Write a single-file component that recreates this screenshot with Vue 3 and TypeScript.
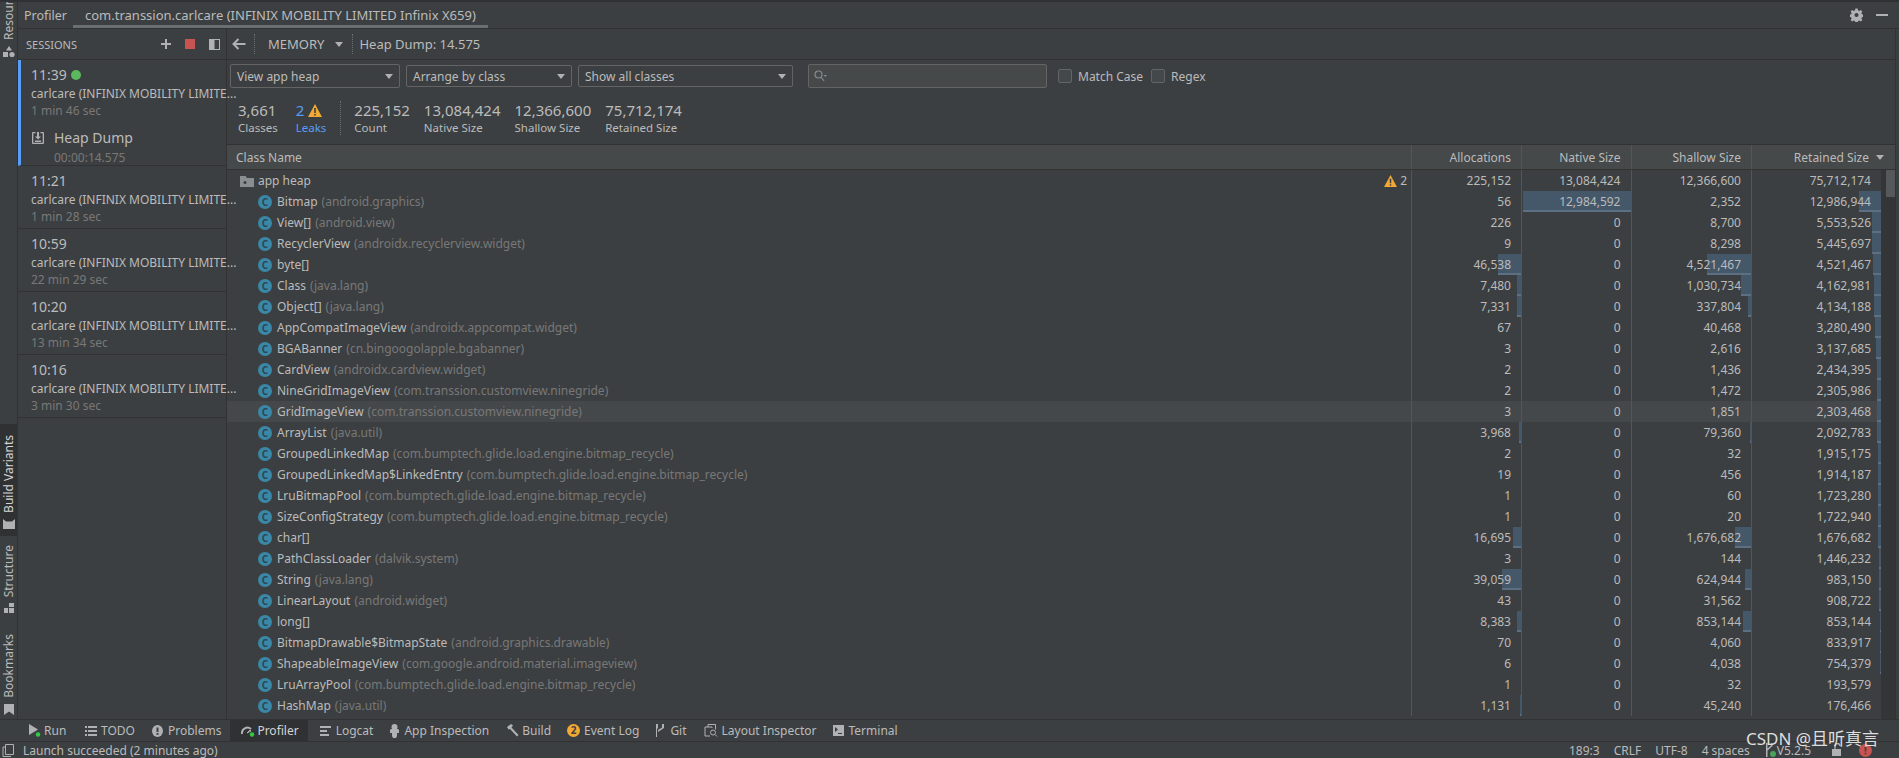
<script setup lang="ts">
interface HeapRow {
  name: string
  pkg: string
  alloc: number
  native: number
  shallow: number
  retained: number
}

interface Session {
  time: string
  duration: string
}

interface ToolTab {
  id: string
  label: string
}

const totals = { alloc: 225152, native: 13084424, shallow: 12366600, retained: 75712174 }

const rows: HeapRow[] = [
  { name: 'Bitmap', pkg: 'android.graphics', alloc: 56, native: 12984592, shallow: 2352, retained: 12986944 },
  { name: 'View[]', pkg: 'android.view', alloc: 226, native: 0, shallow: 8700, retained: 5553526 },
  { name: 'RecyclerView', pkg: 'androidx.recyclerview.widget', alloc: 9, native: 0, shallow: 8298, retained: 5445697 },
  { name: 'byte[]', pkg: '', alloc: 46538, native: 0, shallow: 4521467, retained: 4521467 },
  { name: 'Class', pkg: 'java.lang', alloc: 7480, native: 0, shallow: 1030734, retained: 4162981 },
  { name: 'Object[]', pkg: 'java.lang', alloc: 7331, native: 0, shallow: 337804, retained: 4134188 },
  { name: 'AppCompatImageView', pkg: 'androidx.appcompat.widget', alloc: 67, native: 0, shallow: 40468, retained: 3280490 },
  { name: 'BGABanner', pkg: 'cn.bingoogolapple.bgabanner', alloc: 3, native: 0, shallow: 2616, retained: 3137685 },
  { name: 'CardView', pkg: 'androidx.cardview.widget', alloc: 2, native: 0, shallow: 1436, retained: 2434395 },
  { name: 'NineGridImageView', pkg: 'com.transsion.customview.ninegride', alloc: 2, native: 0, shallow: 1472, retained: 2305986 },
  { name: 'GridImageView', pkg: 'com.transsion.customview.ninegride', alloc: 3, native: 0, shallow: 1851, retained: 2303468 },
  { name: 'ArrayList', pkg: 'java.util', alloc: 3968, native: 0, shallow: 79360, retained: 2092783 },
  { name: 'GroupedLinkedMap', pkg: 'com.bumptech.glide.load.engine.bitmap_recycle', alloc: 2, native: 0, shallow: 32, retained: 1915175 },
  { name: 'GroupedLinkedMap$LinkedEntry', pkg: 'com.bumptech.glide.load.engine.bitmap_recycle', alloc: 19, native: 0, shallow: 456, retained: 1914187 },
  { name: 'LruBitmapPool', pkg: 'com.bumptech.glide.load.engine.bitmap_recycle', alloc: 1, native: 0, shallow: 60, retained: 1723280 },
  { name: 'SizeConfigStrategy', pkg: 'com.bumptech.glide.load.engine.bitmap_recycle', alloc: 1, native: 0, shallow: 20, retained: 1722940 },
  { name: 'char[]', pkg: '', alloc: 16695, native: 0, shallow: 1676682, retained: 1676682 },
  { name: 'PathClassLoader', pkg: 'dalvik.system', alloc: 3, native: 0, shallow: 144, retained: 1446232 },
  { name: 'String', pkg: 'java.lang', alloc: 39059, native: 0, shallow: 624944, retained: 983150 },
  { name: 'LinearLayout', pkg: 'android.widget', alloc: 43, native: 0, shallow: 31562, retained: 908722 },
  { name: 'long[]', pkg: '', alloc: 8383, native: 0, shallow: 853144, retained: 853144 },
  { name: 'BitmapDrawable$BitmapState', pkg: 'android.graphics.drawable', alloc: 70, native: 0, shallow: 4060, retained: 833917 },
  { name: 'ShapeableImageView', pkg: 'com.google.android.material.imageview', alloc: 6, native: 0, shallow: 4038, retained: 754379 },
  { name: 'LruArrayPool', pkg: 'com.bumptech.glide.load.engine.bitmap_recycle', alloc: 1, native: 0, shallow: 32, retained: 193579 },
  { name: 'HashMap', pkg: 'java.util', alloc: 1131, native: 0, shallow: 45240, retained: 176466 },
]

const pastSessions: Session[] = [
  { time: '11:21', duration: '1 min 28 sec' },
  { time: '10:59', duration: '22 min 29 sec' },
  { time: '10:20', duration: '13 min 34 sec' },
  { time: '10:16', duration: '3 min 30 sec' },
]

const stats = [
  { value: '225,152', label: 'Count' },
  { value: '13,084,424', label: 'Native Size' },
  { value: '12,366,600', label: 'Shallow Size' },
  { value: '75,712,174', label: 'Retained Size' },
]

const tools: ToolTab[] = [
  { id: 'run', label: 'Run' },
  { id: 'todo', label: 'TODO' },
  { id: 'problems', label: 'Problems' },
  { id: 'profiler', label: 'Profiler' },
  { id: 'logcat', label: 'Logcat' },
  { id: 'inspection', label: 'App Inspection' },
  { id: 'build', label: 'Build' },
  { id: 'event', label: 'Event Log' },
  { id: 'git', label: 'Git' },
  { id: 'layout', label: 'Layout Inspector' },
  { id: 'terminal', label: 'Terminal' },
]

const fmt = (n: number) => n.toLocaleString('en-US')
const pct = (v: number, total: number) => `${(v / total) * 100}%`
</script>

<template>
  <div class="ide">
    <div class="top-band"></div>
    <div class="main">
      <aside class="strip">
        <div class="strip-clip"><span>Resource Manager</span></div>
        <svg class="strip-icon first" width="12" height="12" viewBox="0 0 12 12"><path d="M6 0l3 4.500H3z" fill="#afb1b3"/><rect x="0" y="6" width="5" height="5" fill="#afb1b3"/><circle cx="9" cy="8.500" r="2.600" fill="#afb1b3"/></svg>
        <div class="strip-tab active">
          <span class="vtext">Build Variants</span>
          <svg width="12" height="10" viewBox="0 0 12 10"><path d="M0 0l3 2.500h6L12 0v10H0z" fill="#afb1b3"/></svg>
        </div>
        <div class="strip-tab structure">
          <span class="vtext">Structure</span>
          <svg width="10" height="10" viewBox="0 0 10 10"><rect x="5" y="0" width="5" height="4" fill="#afb1b3"/><rect x="0" y="5" width="4" height="5" fill="#afb1b3"/><rect x="5" y="5" width="5" height="5" fill="#afb1b3"/></svg>
        </div>
        <div class="strip-tab bookmarks">
          <span class="vtext">Bookmarks</span>
          <svg width="10" height="11" viewBox="0 0 10 11"><path d="M0 0h10v11L5 7.500 0 11z" fill="#afb1b3"/></svg>
        </div>
      </aside>

      <div class="workspace">
        <header class="tabs">
          <span class="tab-title">Profiler</span>
          <span class="tab-active">com.transsion.carlcare (INFINIX MOBILITY LIMITED Infinix X659)</span>
          <span class="spacer"></span>
          <svg class="gear" width="13" height="14" viewBox="0 0 14 14"><path fill="#afb1b3" fill-rule="evenodd" d="M5.800 0h2.400l.4 2 1.300.6 1.800-1.100 1.600 1.700-1.100 1.700.6 1.300 2 .4v2.400l-2 .4-.6 1.300 1.100 1.800-1.600 1.600-1.800-1.100-1.300.6-.4 2H5.800l-.4-2-1.300-.6-1.800 1.100L.700 12.500l1.100-1.800-.6-1.300-2-.4V6.600l2-.4.6-1.300-1.100-1.700 1.600-1.700 1.800 1.100 1.300-.6zM7 4.800a2.200 2.200 0 1 0 0 4.400 2.200 2.200 0 0 0 0-4.400z"/></svg>
          <span class="minimize"></span>
        </header>

        <div class="panels">
          <section class="sessions">
            <div class="sessions-head">
              <span class="sessions-title">SESSIONS</span>
              <svg width="12" height="12" viewBox="0 0 12 12" class="plus"><path d="M6 1v10M1 6h10" stroke="#afb1b3" stroke-width="2"/></svg>
              <span class="stop"></span>
              <svg width="11" height="11" viewBox="0 0 11 11" class="split"><rect x=".5" y=".5" width="10" height="10" fill="none" stroke="#afb1b3"/><rect x="1" y="1" width="4.500" height="9" fill="#afb1b3"/></svg>
            </div>
            <div class="session current">
              <div class="s-time">11:39 <i class="live"></i></div>
              <div class="s-name">carlcare (INFINIX MOBILITY LIMITE...</div>
              <div class="s-dur">1 min 46 sec</div>
              <div class="dump">
                <svg width="12" height="12" viewBox="0 0 12 12"><path fill="#afb1b3" fill-rule="evenodd" d="M1 0h2.500v1.200H1.300v9.500h9.400V1.200H8.500V0H11a1 1 0 0 1 1 1v10a1 1 0 0 1-1 1H1a1 1 0 0 1-1-1V1a1 1 0 0 1 1-1z"/><path fill="#afb1b3" d="M5 0h2v4.500h2L6 7.500 3 4.500h2zM3 8.500h6V10H3z"/></svg>
                <span>Heap Dump</span>
              </div>
              <div class="dump-time">00:00:14.575</div>
            </div>
            <div v-for="s in pastSessions" :key="s.time" class="session">
              <div class="s-time">{{ s.time }}</div>
              <div class="s-name">carlcare (INFINIX MOBILITY LIMITE...</div>
              <div class="s-dur">{{ s.duration }}</div>
            </div>
          </section>

          <section class="memory">
            <div class="toolbar">
              <svg width="14" height="12" viewBox="0 0 14 12"><path d="M13.500 6H2M6.500 1L1.500 6l5 5" fill="none" stroke="#afb1b3" stroke-width="2"/></svg>
              <i class="dots first-dots"></i>
              <span class="mem-label">MEMORY</span>
              <i class="caret big"></i>
              <i class="dots"></i>
              <span class="dump-label">Heap Dump: 14.575</span>
            </div>

            <div class="filters">
              <div class="combo c1"><span>View app heap</span><i class="caret"></i></div>
              <div class="combo c2"><span>Arrange by class</span><i class="caret"></i></div>
              <div class="combo c3"><span>Show all classes</span><i class="caret"></i></div>
              <div class="search">
                <svg width="13" height="12" viewBox="0 0 13 12"><circle cx="4.500" cy="4.500" r="3.500" fill="none" stroke="#868a8c" stroke-width="1.200"/><path d="M7 7l3 4" stroke="#868a8c" stroke-width="1.200"/><path d="M9.500 5h3.500l-1.750 2z" fill="#868a8c"/></svg>
              </div>
              <label class="check c-match"><i></i>Match Case</label>
              <label class="check"><i></i>Regex</label>
            </div>

            <div class="stats">
              <div class="stat s-classes"><b>3,661</b><span>Classes</span></div>
              <div class="stat s-leaks">
                <b class="blue">2 <svg width="14" height="13" viewBox="0 0 14 13"><path d="M7 0l7 13H0z" fill="#f2a933"/><path d="M6.200 4h1.600v5H6.200zM6.200 10h1.600v1.600H6.200z" fill="#3c3f41"/></svg></b>
                <span class="blue">Leaks</span>
              </div>
              <i class="dots tall"></i>
              <div v-for="st in stats" :key="st.label" class="stat"><b>{{ st.value }}</b><span>{{ st.label }}</span></div>
            </div>

            <div class="thead">
              <div class="th name">Class Name</div>
              <div class="th">Allocations</div>
              <div class="th">Native Size</div>
              <div class="th">Shallow Size</div>
              <div class="th sorted">Retained Size <i class="caret"></i></div>
            </div>

            <div class="tbody">
              <div class="rows">
                <div class="row">
                  <div class="cell name root">
                    <svg width="14" height="12" viewBox="0 0 14 12"><path d="M0 1h5.500l1.500 2h7v9H0z" fill="#8a8e91"/><circle cx="5" cy="7.500" r="1.500" fill="#3c3f41"/></svg>
                    <span class="cn">app heap</span>
                    <span class="leak">
                      <svg width="13" height="12" viewBox="0 0 14 13"><path d="M7 0l7 13H0z" fill="#f2a933"/><path d="M6.200 4h1.600v5H6.200zM6.200 10h1.600v1.600H6.200z" fill="#3c3f41"/></svg>
                      2
                    </span>
                  </div>
                  <div class="cell num">{{ fmt(totals.alloc) }}</div>
                  <div class="cell num">{{ fmt(totals.native) }}</div>
                  <div class="cell num">{{ fmt(totals.shallow) }}</div>
                  <div class="cell num">{{ fmt(totals.retained) }}</div>
                </div>
                <div v-for="r in rows" :key="r.name" class="row" :class="{ hover: r.name === 'GridImageView' }">
                  <div class="cell name">
                    <span class="cls">C</span>
                    <span class="cn">{{ r.name }}</span>
                    <span v-if="r.pkg" class="pkg">({{ r.pkg }})</span>
                  </div>
                  <div class="cell num"><i class="bar" :style="{ width: pct(r.alloc, totals.alloc) }"></i><span>{{ fmt(r.alloc) }}</span></div>
                  <div class="cell num"><i class="bar" :style="{ width: pct(r.native, totals.native) }"></i><span>{{ fmt(r.native) }}</span></div>
                  <div class="cell num"><i class="bar" :style="{ width: pct(r.shallow, totals.shallow) }"></i><span>{{ fmt(r.shallow) }}</span></div>
                  <div class="cell num"><i class="bar" :style="{ width: pct(r.retained, totals.retained) }"></i><span>{{ fmt(r.retained) }}</span></div>
                </div>
              </div>
              <div class="scroll"><i></i></div>
            </div>
          </section>
          <div class="edge"></div>
        </div>
      </div>
    </div>

    <nav class="toolbar-bottom">
      <div v-for="t in tools" :key="t.id" class="tool" :class="['t-' + t.id, { on: t.id === 'profiler' }]">
        <svg v-if="t.id === 'run'" width="13" height="13" viewBox="0 0 13 13"><path d="M1 0l9 5.500L1 11z" fill="#afb1b3"/><circle cx="10" cy="10.500" r="2.200" fill="#2ecc40"/></svg>
        <svg v-else-if="t.id === 'todo'" width="12" height="10" viewBox="0 0 12 10"><path d="M0 0h2v2H0zM3 0h9v2H3zM0 4h2v2H0zM3 4h9v2H3zM0 8h2v2H0zM3 8h9v2H3z" fill="#afb1b3"/></svg>
        <svg v-else-if="t.id === 'problems'" width="11" height="12" viewBox="0 0 11 12"><ellipse cx="5.500" cy="6" rx="5.500" ry="6" fill="#afb1b3"/><rect x="4.500" y="2.500" width="2" height="4.500" fill="#3c3f41"/><rect x="4.500" y="8" width="2" height="1.800" fill="#3c3f41"/></svg>
        <svg v-else-if="t.id === 'profiler'" width="14" height="13" viewBox="0 0 14 13"><path d="M1 10a5.500 5.500 0 0 1 9-5" fill="none" stroke="#afb1b3" stroke-width="2"/><path d="M6 9l3-3 1 1z" stroke="#afb1b3"/><circle cx="11" cy="10.500" r="2.200" fill="#2ecc40"/></svg>
        <svg v-else-if="t.id === 'logcat'" width="11" height="10" viewBox="0 0 11 10"><path d="M0 0h11v2H0zM0 4h7v2H0zM0 8h9v2H0z" fill="#afb1b3"/></svg>
        <svg v-else-if="t.id === 'inspection'" width="11" height="14" viewBox="0 0 11 14"><circle cx="5.500" cy="3" r="3" fill="#afb1b3"/><path d="M2 5h7l1 1v3H8v3l-1 2H4l-1-2V9H1V6z" fill="#afb1b3"/></svg>
        <svg v-else-if="t.id === 'build'" width="13" height="13" viewBox="0 0 13 13"><path d="M1 3l4-3 2 1.500L5.500 3.500 12.500 11 11 12.500 4 5 2.500 5.500z" fill="#afb1b3"/></svg>
        <span v-else-if="t.id === 'event'" class="badge">2</span>
        <svg v-else-if="t.id === 'git'" width="10" height="13" viewBox="0 0 10 13"><path d="M2 0h2v4l-1 1v8H2z M8 0h2v4L4 8V6l4-2.500z" fill="#afb1b3"/></svg>
        <svg v-else-if="t.id === 'layout'" width="14" height="13" viewBox="0 0 14 13"><path d="M4 .5h7.500v5M4 .5V3M1 3h7v1M1 3v9h5" fill="none" stroke="#afb1b3"/><circle cx="9" cy="8.500" r="2.500" fill="none" stroke="#afb1b3"/><path d="M11 10.500l2 2" stroke="#afb1b3"/></svg>
        <svg v-else width="11" height="11" viewBox="0 0 11 11"><rect width="11" height="11" fill="#afb1b3"/><path d="M2 2l3 2.500L2 7zM5 8h4v1H5z" fill="#3c3f41"/></svg>
        <span>{{ t.label }}</span>
      </div>
    </nav>

    <footer class="status">
      <svg class="st-box" width="12" height="13" viewBox="0 0 12 13"><path d="M3.500.5h8v10h-8zM3.500 3H1v9.500h8" fill="none" stroke="#afb1b3"/></svg>
      <span>Launch succeeded (2 minutes ago)</span>
      <span class="spacer"></span>
      <span class="st st-pos">189:3</span>
      <span class="st">CRLF</span>
      <span class="st">UTF-8</span>
      <span class="st">4 spaces</span>
      <svg class="st-git" width="12" height="14" viewBox="0 0 12 14"><path d="M2 0h1.500v14H2zM7 0h1.500v3L3 8V6l4-3.500z" fill="#afb1b3"/><circle cx="9" cy="11" r="3" fill="#4aa35a"/></svg>
      <span class="st">V5.2.5</span>
      <svg class="st-lock" width="12" height="14" viewBox="0 0 12 14"><path d="M4 6V3a2.500 2.500 0 0 1 5 0" fill="none" stroke="#afb1b3" stroke-width="1.300"/><rect x="1" y="6" width="9" height="7" fill="#afb1b3"/></svg>
      <svg class="st-err" width="13" height="13" viewBox="0 0 13 13"><circle cx="6.500" cy="6.500" r="6.500" fill="#c75450"/><path d="M5.700 2.500h1.600v5H5.700zM5.700 8.700h1.600v1.600H5.700z" fill="#3c3f41"/></svg>
      <span class="st-end"></span>
    </footer>

    <div class="watermark">CSDN @且听真言</div>
  </div>
</template>

<style>
html, body {
  background: #3c3f41;
  overflow: hidden;
}
</style>

<style scoped>
.ide {
  position: relative;
  width: 1899px;
  height: 758px;
  display: flex;
  flex-direction: column;
  overflow: hidden;
  background: #3c3f41;
  color: #bbbbbb;
  font-family: "Noto Sans", "Liberation Sans", sans-serif;
  font-size: 12px;
}

.top-band { height: 2px; flex: none; background: #2f3133; }
.main { flex: none; height: 717px; display: flex; border-bottom: 1px solid #323232; }
.spacer { flex: 1; }

/* left tool strip */
.strip {
  width: 17px;
  flex: none;
  border-right: 1px solid #323232;
  display: flex;
  flex-direction: column;
  align-items: center;
}
.strip-clip {
  height: 38px;
  width: 17px;
  overflow: hidden;
  writing-mode: vertical-rl;
  transform: rotate(180deg);
  white-space: nowrap;
  line-height: 17px;
}
.strip-icon.first { margin-top: 6px; }
.strip-tab {
  width: 17px;
  display: flex;
  flex-direction: column;
  align-items: center;
  gap: 6px;
}
.strip-tab.active {
  margin-top: 366px;
  height: 112px;
  padding-top: 11px;
  box-sizing: border-box;
  background: #2f3133;
  color: #d4d4d4;
}
.strip-tab.structure { margin-top: 9px; }
.strip-tab.bookmarks { margin-top: 21px; }
.vtext {
  writing-mode: vertical-rl;
  transform: rotate(180deg);
  line-height: 17px;
  white-space: nowrap;
}

.workspace { flex: 1; min-width: 0; display: flex; flex-direction: column; }

.tabs {
  height: 26px;
  flex: none;
  display: flex;
  align-items: center;
  border-bottom: 1px solid #323232;
  position: relative;
}
.tab-title { margin-left: 6px; font-size: 12.500px; }
.tab-active {
  margin-left: 6px;
  padding: 0 12px;
  align-self: stretch;
  display: flex;
  align-items: center;
  font-size: 13px;
  box-shadow: inset 0 -3px 0 #6a7072;
}
.gear { margin-right: 13px; }
.minimize { width: 12px; height: 2px; background: #afb1b3; margin-right: 11px; }

.panels { flex: 1; min-height: 0; display: flex; }

/* sessions */
.sessions { width: 208px; flex: none; border-right: 1px solid #323232; }
.sessions-head {
  height: 30px;
  display: flex;
  align-items: center;
  border-bottom: 1px solid #323232;
  padding-left: 8px;
}
.sessions-title { font-size: 11px; width: 134px; }
.plus { margin-right: 13px; }
.stop { width: 10px; height: 10px; background: #c75450; margin-right: 14px; }
.session {
  height: 62px;
  border-bottom: 1px solid #323232;
  padding-left: 13px;
  box-sizing: content-box;
  white-space: nowrap;
}
.session.current { height: 105px; border-left: 3px solid #589df6; padding-left: 10px; }
.s-time { font-size: 14px; line-height: 19px; padding-top: 5px; display: flex; align-items: center; gap: 4px; }
.live { width: 10px; height: 10px; border-radius: 50%; background: #5cb85c; }
.s-name { line-height: 18px; margin-top: 1px; }
.s-dur { color: #787878; line-height: 16px; }
.dump { display: flex; align-items: center; gap: 10px; margin-top: 9px; font-size: 14px; line-height: 20px; padding-left: 1px; }
.dump-time { color: #787878; padding-left: 23px; line-height: 18px; margin-top: 1px; }

/* memory panel */
.memory { flex: 1; min-width: 0; display: flex; flex-direction: column; }
.edge { width: 3px; flex: none; border-left: 1px solid #323232; }

.toolbar {
  height: 30px;
  flex: none;
  display: flex;
  align-items: center;
  padding-left: 5px;
  border-bottom: 1px solid #323232;
}
.dots { width: 0; height: 20px; border-left: 1px dotted #6a6e70; }
.first-dots { margin-left: 8px; }
.mem-label { font-size: 13px; margin-left: 13px; }
.caret {
  width: 0;
  height: 0;
  border-left: 4px solid transparent;
  border-right: 4px solid transparent;
  border-top: 5px solid #afb1b3;
}
.caret.big { margin: 0 9px 0 11px; }
.dump-label { font-size: 13px; margin-left: 6px; }

.filters {
  height: 32px;
  flex: none;
  display: flex;
  align-items: center;
  padding-left: 3px;
}
.combo {
  height: 22px;
  display: flex;
  align-items: center;
  justify-content: space-between;
  border: 1px solid #646464;
  border-radius: 2px;
  padding: 0 6px;
  box-sizing: border-box;
  margin-right: 6px;
}
.c1 { width: 170px; height: 24px; }
.c2 { width: 166px; }
.c3 { width: 215px; margin-right: 15px; }
.search {
  width: 239px;
  height: 24px;
  box-sizing: border-box;
  background: #45494a;
  border: 1px solid #646464;
  border-radius: 2px;
  display: flex;
  align-items: center;
  padding-left: 5px;
  margin-right: 11px;
}
.check { display: flex; align-items: center; gap: 6px; margin-right: 8px; }
.check i {
  width: 14px;
  height: 14px;
  box-sizing: border-box;
  border: 1px solid #646464;
  border-radius: 2px;
  background: #43494a;
}
.c-match { margin-right: 8px; }

.stats {
  height: 52px;
  flex: none;
  display: flex;
  align-items: center;
  padding-left: 11px;
  border-bottom: 1px solid #323232;
  box-sizing: content-box;
}
.stat { display: flex; flex-direction: column; margin-right: 14px; }
.stat b { font-weight: 400; font-size: 15px; line-height: 20px; display: flex; align-items: center; gap: 4px; }
.stat span { font-size: 11.500px; line-height: 16px; }
.blue { color: #589df6; }
.s-classes { margin-right: 18px; }
.s-leaks { margin-right: 14px; }
.dots.tall { height: 34px; margin-right: 13px; }

.thead {
  height: 24px;
  flex: none;
  display: grid;
  grid-template-columns: minmax(0, 1fr) 110px 109.500px 120.500px 144px;
  background: #45494a;
  border-bottom: 1px solid #323232;
  align-items: stretch;
}
.th {
  display: flex;
  align-items: center;
  justify-content: flex-end;
  padding-right: 10px;
  border-left: 1px solid #515658;
}
.th.name { justify-content: flex-start; border-left: 0; padding-left: 9px; }
.th.sorted { padding-right: 28px; gap: 7px; }
.th.sorted .caret { margin-right: -17px; }

.tbody { flex: 1; min-height: 0; display: flex; }
.rows { flex: 1; min-width: 0; }
.row {
  height: 21px;
  display: grid;
  grid-template-columns: minmax(0, 1fr) 110px 109.500px 120.500px 130px;
}
.row.hover { background: #45484a; }
.cell {
  position: relative;
  display: flex;
  align-items: center;
  white-space: nowrap;
  overflow: hidden;
}
.cell.name { padding-left: 31px; gap: 5px; }
.cell.root { padding-left: 13px; gap: 4px; }
.cell.num {
  justify-content: flex-end;
  padding-right: 10px;
  border-left: 1px solid #515658;
}
.cell.num span { position: relative; }
.bar {
  position: absolute;
  right: 0;
  top: 0;
  height: 21px;
  box-sizing: border-box;
  background: #45586a;
  border-bottom: 2px solid #5d7083;
}
.cls {
  width: 14px;
  height: 14px;
  border-radius: 50%;
  background: #3a87a8;
  color: #2b4855;
  font-size: 10px;
  font-weight: 700;
  line-height: 14px;
  text-align: center;
  flex: none;
}
.pkg { color: #787878; margin-left: -1px; }
.leak {
  position: absolute;
  right: 4px;
  top: 0;
  height: 21px;
  display: flex;
  align-items: center;
  gap: 3px;
}

.scroll { width: 14px; flex: none; background: #333537; position: relative; }
.scroll i {
  position: absolute;
  right: 0;
  top: 0;
  width: 9px;
  height: 27px;
  background: #56595b;
}

/* bottom bars */
.toolbar-bottom {
  height: 21px;
  flex: none;
  display: flex;
  align-items: center;
  padding-left: 28px;
  border-bottom: 1px solid #323232;
}
.tool { display: flex; align-items: center; gap: 3px; height: 21px; margin-right: 16px; white-space: nowrap; }
.t-run { width: 41px; margin-right: 16px; }
.t-todo { gap: 4px; margin-right: 17px; }
.t-problems { gap: 5px; margin-right: 9px; }
.t-profiler {
  background: #2f3133;
  color: #d4d4d4;
  padding: 0 9px 0 11px;
  margin-right: 12px;
  gap: 2px;
}
.t-logcat { gap: 5px; margin-right: 16px; }
.t-inspection { gap: 4px; margin-right: 17px; }
.t-event { margin-right: 15px; gap: 4px; }
.t-git { gap: 6px; margin-right: 17px; }
.t-layout { gap: 4px; margin-right: 16px; }
.t-terminal { gap: 5px; }
.badge {
  width: 13px;
  height: 13px;
  border-radius: 50%;
  background: #f2a933;
  color: #3c3f41;
  font-size: 10px;
  font-weight: 700;
  line-height: 13px;
  text-align: center;
}

.status {
  height: 16px;
  flex: none;
  display: flex;
  align-items: center;
  padding-left: 2px;
  gap: 9px;
}
.st { margin-right: 5px; }
.st-git { margin-right: -8px; }
.st-lock { margin-left: 6px; margin-right: 7px; }
.st-end { width: 18px; }

.watermark {
  position: absolute;
  left: 1746px;
  top: 728px;
  font-size: 17px;
  line-height: 22px;
  color: #dedede;
  font-family: "Noto Sans", "Noto Sans CJK SC", sans-serif;
  white-space: nowrap;
}
</style>
